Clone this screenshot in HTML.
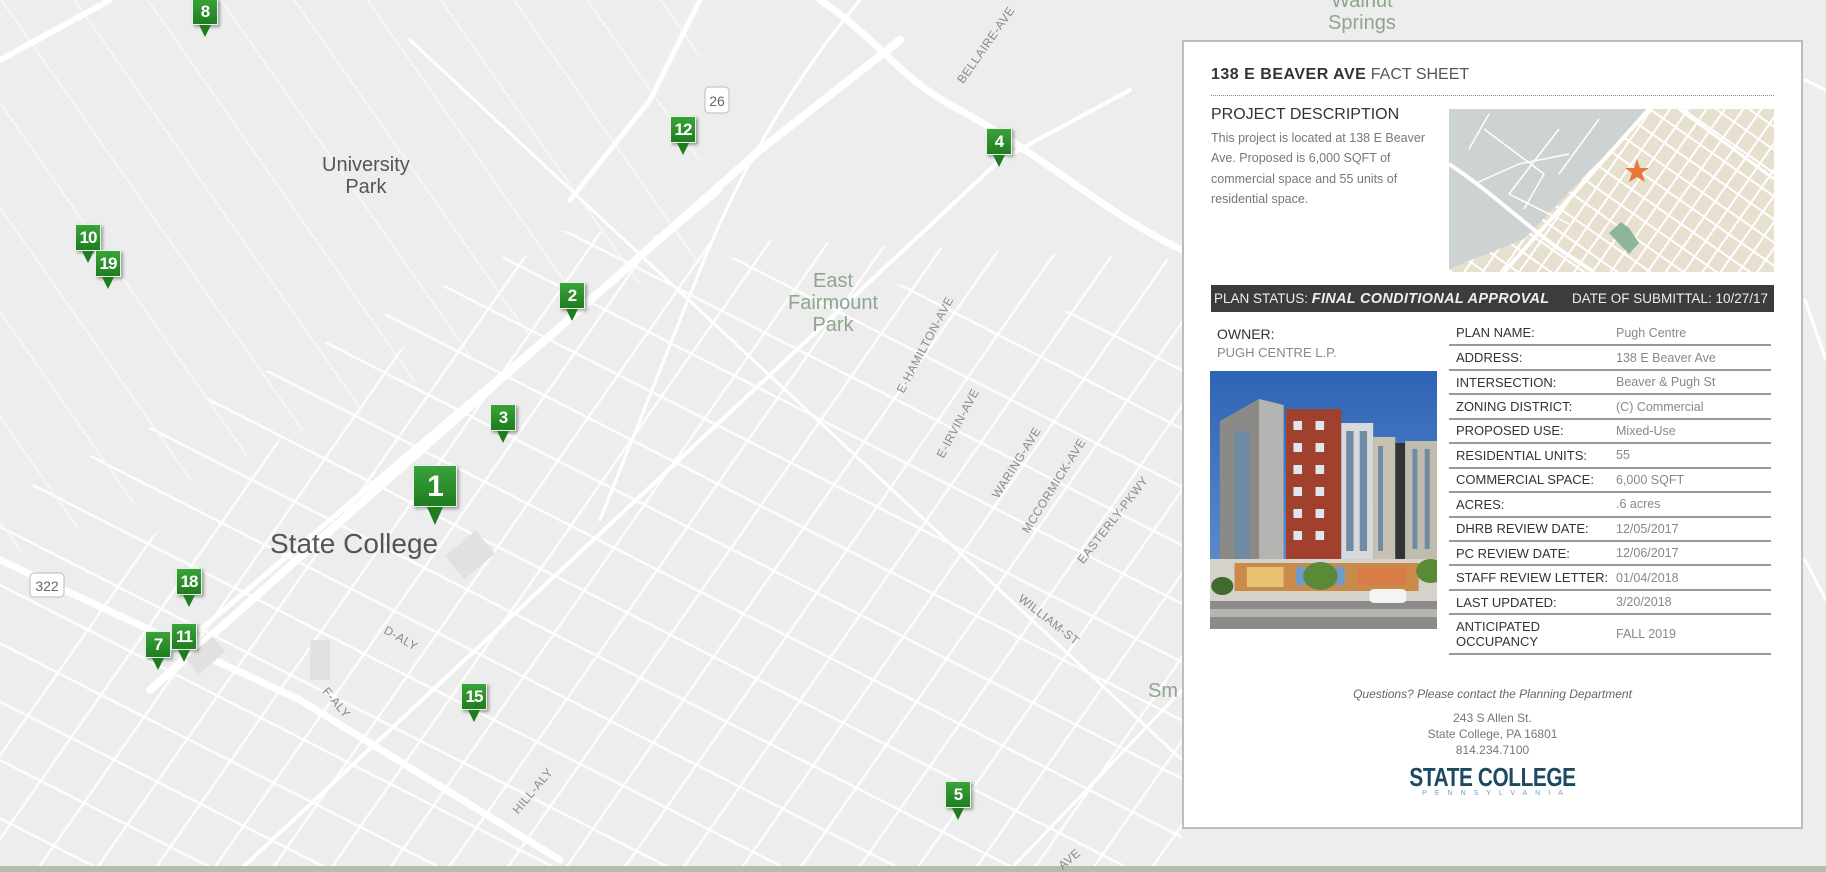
<!DOCTYPE html>
<html><head><meta charset="utf-8"><style>
*{margin:0;padding:0;box-sizing:border-box}
body{width:1826px;height:872px;overflow:hidden;background:#ededed;font-family:"Liberation Sans",sans-serif;position:relative}
#map{position:absolute;left:0;top:0}
.mk{position:absolute;width:26px;height:27px;background:linear-gradient(#3aa33a,#1f7d1f);border:1px solid #e8f3e8;color:#fff;font:bold 17px "Liberation Sans",sans-serif;text-align:center;line-height:26px;box-shadow:2px 2px 3px rgba(0,0,0,.35);letter-spacing:-1px}
.mk:after{content:"";position:absolute;left:50%;margin-left:-6px;top:26px;border-left:6px solid transparent;border-right:6px solid transparent;border-top:12px solid #1f7d1f}
.mk.big{width:44px;height:42px;font-size:30px;line-height:42px}
.mk.big:after{top:41px;margin-left:-8px;border-left:8px solid transparent;border-right:8px solid transparent;border-top:18px solid #1f7d1f}
.lbl{position:absolute;color:#555;white-space:nowrap}
.rl{position:absolute;color:#8a8a8a;font-size:12px;white-space:nowrap;letter-spacing:.5px;transform-origin:left center}
#panel{position:absolute;left:1182px;top:40px;width:621px;height:789px;background:#fff;border:2px solid #bdbdbd}
.p{position:absolute;white-space:nowrap}
table{border-collapse:collapse;position:absolute;left:265px;top:279px;width:322px}
td{font-size:13px;height:24.45px;border-bottom:2px solid #999;padding:0 0 0 7px;vertical-align:middle}
td.k{color:#333;width:160px}
td.v{color:#888;font-size:12.5px}
</style></head><body>
<svg id="map" width="1826" height="872" viewBox="0 0 1826 872">
<defs>
<pattern id="pa" width="48" height="48" patternUnits="userSpaceOnUse" patternTransform="rotate(35)"><rect x="0" y="0" width="2.5" height="48" fill="#fff"/></pattern>
<pattern id="pb" width="50" height="52" patternUnits="userSpaceOnUse" patternTransform="rotate(27)"><rect x="0" y="0" width="50" height="2.5" fill="#fff"/></pattern>
<pattern id="pc" width="60" height="60" patternUnits="userSpaceOnUse" patternTransform="rotate(-35)"><rect x="0" y="0" width="2" height="60" fill="#f8f8f8"/></pattern>
</defs>
<rect width="1826" height="872" fill="#ededed"/>
<polygon points="120,560 560,230 1182,260 1182,866 0,866 0,720" fill="url(#pa)" opacity=".9"/>
<polygon points="0,500 560,230 1182,330 1182,866 0,866" fill="url(#pb)" opacity=".9"/>
<polygon points="0,0 700,0 700,260 0,560" fill="url(#pc)" opacity=".8"/>
<g stroke="#fff" fill="none" stroke-linecap="round">
<path d="M0,60 L110,0" stroke-width="6"/>
<path d="M150,690 L760,150 L900,40" stroke-width="8"/>
<path d="M200,630 L720,190" stroke-width="5"/>
<path d="M0,560 L300,700 L560,860" stroke-width="7"/>
<path d="M240,870 L1000,160 L1130,90" stroke-width="4"/>
<path d="M820,0 C880,40 900,80 960,110 C1050,160 1100,210 1182,250" stroke-width="7"/>
<path d="M700,0 L650,100 L570,200" stroke-width="5"/>
<path d="M410,40 L1182,760" stroke-width="3"/>
<path d="M860,0 Q760,120 700,270 L600,520" stroke-width="3"/>
<path d="M1010,870 L1182,690" stroke-width="3"/>
<path d="M1805,80 L1826,90" stroke-width="3"/>
<path d="M1805,300 L1826,360" stroke-width="3"/>
<path d="M1805,560 L1826,600" stroke-width="3"/>
</g>
<g fill="#e1e1e1"><rect x="450" y="540" width="40" height="30" transform="rotate(-40 470 555)"/><rect x="190" y="650" width="35" height="20" transform="rotate(-40 200 660)"/><rect x="310" y="640" width="20" height="40"/></g>
<rect x="705" y="87" width="24" height="26" rx="4" fill="#fff" stroke="#bbb"/><text x="717" y="106" font-size="14" fill="#666" text-anchor="middle" font-family="Liberation Sans">26</text>
<rect x="30" y="573" width="34" height="24" rx="4" fill="#fff" stroke="#bbb"/><text x="47" y="591" font-size="14" fill="#666" text-anchor="middle" font-family="Liberation Sans">322</text>
<rect x="0" y="866" width="1826" height="6" fill="#b5bea9"/>
</svg>
<div class="lbl" style="left:322px;top:154px;font-size:20px;text-align:center;line-height:22px">University<br>Park</div>
<div class="lbl" style="left:270px;top:528px;font-size:28px;color:#555">State College</div>
<div class="lbl" style="left:788px;top:270px;font-size:20px;color:#8fa58e;text-align:center;line-height:22px">East<br>Fairmount<br>Park</div>
<div class="lbl" style="left:1328px;top:-10px;font-size:20px;color:#8fa58e;text-align:center;line-height:22px">Walnut<br>Springs</div>
<div class="lbl" style="left:1148px;top:680px;font-size:20px;color:#8fa58e">Sm</div>
<div class="rl" style="left:900px;top:385px;transform:rotate(-62deg)">E-HAMILTON-AVE</div>
<div class="rl" style="left:940px;top:450px;transform:rotate(-62deg)">E-IRVIN-AVE</div>
<div class="rl" style="left:995px;top:490px;transform:rotate(-58deg)">WARING-AVE</div>
<div class="rl" style="left:1025px;top:525px;transform:rotate(-58deg)">MCCORMICK-AVE</div>
<div class="rl" style="left:1080px;top:555px;transform:rotate(-52deg)">EASTERLY-PKWY</div>
<div class="rl" style="left:1020px;top:590px;transform:rotate(38deg)">WILLIAM-ST</div>
<div class="rl" style="left:960px;top:75px;transform:rotate(-55deg)">BELLAIRE-AVE</div>
<div class="rl" style="left:385px;top:622px;transform:rotate(30deg)">D-ALY</div>
<div class="rl" style="left:325px;top:682px;transform:rotate(50deg)">F-ALY</div>
<div class="rl" style="left:515px;top:805px;transform:rotate(-50deg)">HILL-ALY</div>
<div class="rl" style="left:1060px;top:860px;transform:rotate(-40deg)">AVE</div>

<div class="mk" style="left:192px;top:-2px">8</div>
<div class="mk" style="left:670px;top:116px">12</div>
<div class="mk" style="left:986px;top:128px">4</div>
<div class="mk" style="left:75px;top:224px">10</div>
<div class="mk" style="left:95px;top:250px">19</div>
<div class="mk" style="left:559px;top:282px">2</div>
<div class="mk" style="left:490px;top:404px">3</div>
<div class="mk big" style="left:413px;top:465px">1</div>
<div class="mk" style="left:176px;top:568px">18</div>
<div class="mk" style="left:145px;top:631px">7</div>
<div class="mk" style="left:171px;top:623px">11</div>
<div class="mk" style="left:461px;top:683px">15</div>
<div class="mk" style="left:945px;top:781px">5</div>

<div id="panel">
<div class="p" style="left:27px;top:24px;font-size:16px;color:#333"><b style="letter-spacing:.5px">138 E BEAVER AVE</b> <span style="color:#555">FACT SHEET</span></div>
<div class="p" style="left:27px;top:53px;width:563px;border-top:1.5px dotted #888"></div>
<div class="p" style="left:27px;top:64px;font-size:16px;color:#333">PROJECT DESCRIPTION</div>
<div class="p" style="left:27px;top:86px;font-size:12.5px;color:#777;line-height:20.3px;white-space:normal;width:228px">This project is located at 138 E Beaver Ave. Proposed is 6,000 SQFT of commercial space and 55 units of residential space.</div>
<svg class="p" style="left:265px;top:67px" width="325" height="163" viewBox="0 0 325 163">
<defs>
<pattern id="ma" width="15" height="15" patternUnits="userSpaceOnUse" patternTransform="rotate(35)"><rect width="2" height="15" fill="#fff"/></pattern>
<pattern id="mb" width="19" height="19" patternUnits="userSpaceOnUse" patternTransform="rotate(-55)"><rect width="2" height="19" fill="#fff"/></pattern>
</defs>
<rect width="325" height="163" fill="#e8e0cf"/>
<rect width="325" height="163" fill="url(#ma)"/>
<rect width="325" height="163" fill="url(#mb)"/>
<polygon points="0,0 200,0 75,130 0,160" fill="#cdd2d2"/>
<g stroke="#fff" fill="none" stroke-width="1.5"><path d="M35,20 L95,65 L75,100"/><path d="M110,20 L60,85 L120,115"/><path d="M25,75 L70,55 L120,45"/><path d="M150,10 L110,65"/><path d="M40,5 L20,40"/></g>
<path d="M0,55 C45,85 75,115 110,140 L145,163" stroke="#fff" stroke-width="4" fill="none"/>
<path d="M200,0 L55,163" stroke="#fff" stroke-width="4"/>
<path d="M230,0 L325,70" stroke="#fff" stroke-width="3"/>
<polygon points="160,124 172,113 180,119 190,134 180,145" fill="#8db59a"/>
<polygon points="188,50 191,59 200,59 193,64 196,73 188,68 180,73 183,64 176,59 185,59" fill="#e8783a"/>
</svg>
<div class="p" style="left:27px;top:243px;width:563px;height:27px;background:#3c3c3e;color:#eee;font-size:13.5px;line-height:27px;padding-left:3px">PLAN STATUS: <b style="font-style:italic;font-size:14.5px;letter-spacing:.3px">FINAL CONDITIONAL APPROVAL</b><span style="position:absolute;right:6px">DATE OF SUBMITTAL: 10/27/17</span></div>
<div class="p" style="left:33px;top:284px;font-size:14px;color:#333">OWNER:</div>
<div class="p" style="left:33px;top:303px;font-size:13px;color:#888">PUGH CENTRE L.P.</div>
<svg class="p" style="left:26px;top:329px" width="227" height="258" viewBox="0 0 185 258" preserveAspectRatio="none">
<defs><linearGradient id="sky" x1="0" y1="0" x2="0" y2="1"><stop offset="0" stop-color="#2e64b5"/><stop offset="1" stop-color="#6b97d3"/></linearGradient></defs>
<rect width="185" height="258" fill="url(#sky)"/>
<polygon points="8,50 40,28 58,40 58,200 8,210" fill="#8c8a86"/>
<polygon points="40,28 60,34 60,200 40,204" fill="#b4b4b2"/>
<rect x="62" y="38" width="45" height="150" fill="#a2402e"/>
<rect x="107" y="52" width="26" height="136" fill="#d8d9dc"/>
<rect x="133" y="66" width="18" height="122" fill="#c6c1b1"/>
<rect x="151" y="72" width="8" height="116" fill="#333"/>
<rect x="159" y="70" width="26" height="118" fill="#bfbcae"/>
<g fill="#dfe6ee">
<rect x="68" y="50" width="7" height="9"/><rect x="86" y="50" width="7" height="9"/><rect x="68" y="72" width="7" height="9"/><rect x="86" y="72" width="7" height="9"/><rect x="68" y="94" width="7" height="9"/><rect x="86" y="94" width="7" height="9"/><rect x="68" y="116" width="7" height="9"/><rect x="86" y="116" width="7" height="9"/><rect x="68" y="138" width="7" height="9"/><rect x="86" y="138" width="7" height="9"/><rect x="68" y="160" width="7" height="9"/><rect x="86" y="160" width="7" height="9"/></g>
<g fill="#6f8aa3"><rect x="111" y="60" width="6" height="120"/><rect x="122" y="60" width="6" height="120"/><rect x="137" y="75" width="4" height="105"/><rect x="165" y="78" width="4" height="100"/><rect x="175" y="78" width="4" height="100"/><rect x="20" y="60" width="12" height="140"/></g>
<rect x="0" y="188" width="185" height="45" fill="#d4d2cb"/>
<rect x="20" y="192" width="150" height="28" fill="#c98a4a"/>
<rect x="30" y="196" width="30" height="20" fill="#e7c070"/><rect x="70" y="196" width="40" height="18" fill="#6f9ccd"/><rect x="120" y="196" width="40" height="18" fill="#d97d48"/>
<circle cx="90" cy="205" r="14" fill="#5b8a36"/><circle cx="180" cy="200" r="12" fill="#5b8a36"/><circle cx="10" cy="215" r="9" fill="#3f6c2e"/>
<rect x="0" y="230" width="185" height="28" fill="#8c8b89"/>
<rect x="0" y="238" width="185" height="8" fill="#b6b5b1"/>
<rect x="130" y="218" width="30" height="14" rx="4" fill="#f4f4f4"/>
</svg>
<table>
<tr><td class="k">PLAN NAME:</td><td class="v">Pugh Centre</td></tr>
<tr><td class="k">ADDRESS:</td><td class="v">138 E Beaver Ave</td></tr>
<tr><td class="k">INTERSECTION:</td><td class="v">Beaver &amp; Pugh St</td></tr>
<tr><td class="k">ZONING DISTRICT:</td><td class="v">(C) Commercial</td></tr>
<tr><td class="k">PROPOSED USE:</td><td class="v">Mixed-Use</td></tr>
<tr><td class="k">RESIDENTIAL UNITS:</td><td class="v">55</td></tr>
<tr><td class="k">COMMERCIAL SPACE:</td><td class="v">6,000 SQFT</td></tr>
<tr><td class="k">ACRES:</td><td class="v">.6 acres</td></tr>
<tr><td class="k">DHRB REVIEW DATE:</td><td class="v">12/05/2017</td></tr>
<tr><td class="k">PC REVIEW DATE:</td><td class="v">12/06/2017</td></tr>
<tr><td class="k">STAFF REVIEW LETTER:</td><td class="v">01/04/2018</td></tr>
<tr><td class="k">LAST UPDATED:</td><td class="v">3/20/2018</td></tr>
<tr><td class="k" style="height:40px;line-height:15px">ANTICIPATED<br>OCCUPANCY</td><td class="v">FALL 2019</td></tr>
</table>
<div class="p" style="left:0;width:617px;top:645px;text-align:center;font-size:12px;color:#666;font-style:italic">Questions? Please contact the Planning Department</div>
<div class="p" style="left:0;width:617px;top:668px;text-align:center;font-size:12px;color:#777;line-height:16px">243 S Allen St.<br>State College, PA 16801<br>814.234.7100</div>
<div class="p" style="left:0;width:617px;top:720px;text-align:center;font-size:26px;font-weight:bold;color:#1d4a63;letter-spacing:-.5px;transform:scaleX(.8)">STATE COLLEGE</div>
<div class="p" style="left:0;width:617px;top:748px;text-align:center;font-size:7px;color:#6aa3c6;letter-spacing:8px;padding-left:8px">PENNSYLVANIA</div>
</div>
</body></html>
